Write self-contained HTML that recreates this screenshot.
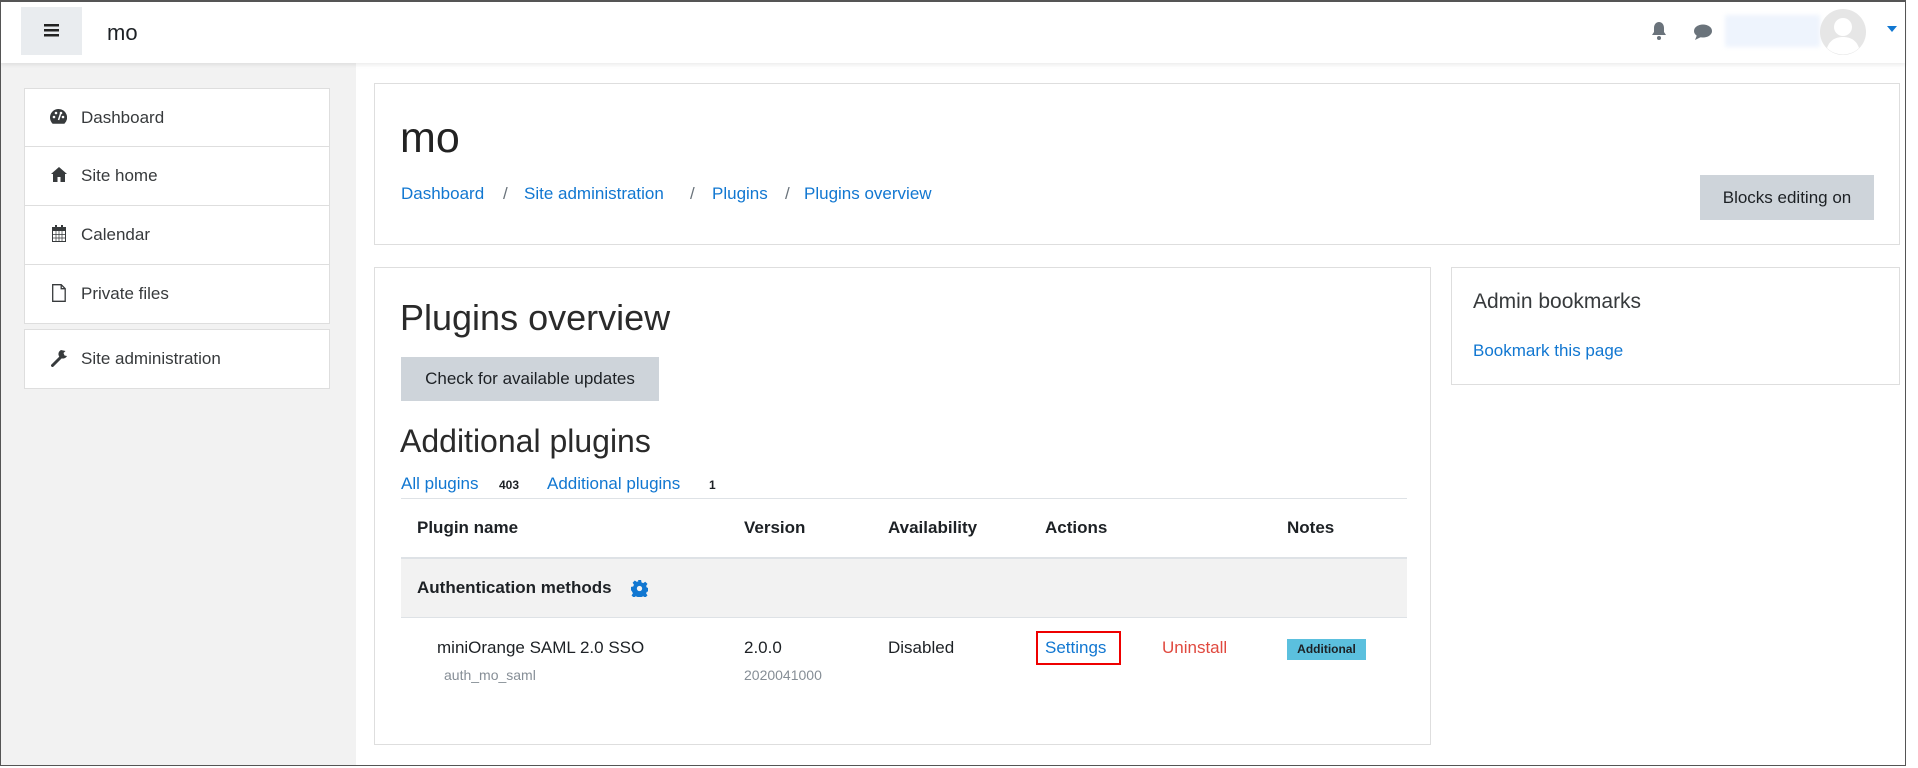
<!DOCTYPE html>
<html><head><meta charset="utf-8"><style>
*{box-sizing:border-box;margin:0;padding:0}
body{width:1918px;height:768px;overflow:hidden;background:#fff;font-family:"Liberation Sans",sans-serif;color:#373a3c;position:relative}
.a{position:absolute;white-space:nowrap}
.frame{position:absolute;left:0;top:0;width:1906px;height:766px;border:1px solid #555;border-top:2px solid #555}
.hdr{position:absolute;left:1px;top:2px;width:1904px;height:61px;background:#fff;box-shadow:0 2px 4px rgba(0,0,0,.08)}
.side{position:absolute;left:1px;top:63px;width:355px;height:702px;background:#f2f2f2}
.box{position:absolute;background:#fff;border:1px solid #dedede}
.link{color:#1177d1}
.nav{font-size:17px;color:#373a3c}
.btn{position:absolute;background:#ced4da;font-size:17px;color:#1d2125;display:flex;align-items:center;justify-content:center}
.th{font-weight:bold;font-size:17px;color:#1d2125}
.sep{color:#6a737b;font-size:17px}
</style></head><body>
<div class="side"></div>
<div class="hdr"></div>
<div class="a" style="left:21px;top:7px;width:61px;height:48px;background:#e9ecef"></div>
<svg class="a" style="left:44px;top:24px" width="15" height="13"><rect y="0" width="15" height="2.5" fill="#222"/><rect y="5" width="15" height="2.5" fill="#222"/><rect y="10" width="15" height="2.5" fill="#222"/></svg>
<div class="a" style="left:107px;top:20px;font-size:22px;color:#1d2125">mo</div>
<svg class="a" style="left:1651px;top:21px" width="16" height="20" viewBox="0 0 16 20"><path d="M8 1c-3 0-5 2.5-5 6v4l-2 3h14l-2-3V7c0-3.5-2-6-5-6z" fill="#6a737b"/><circle cx="8" cy="17" r="2" fill="#6a737b"/></svg>
<svg class="a" style="left:1693px;top:23px" width="20" height="18" viewBox="0 0 20 18"><ellipse cx="10" cy="8" rx="9" ry="6.5" fill="#6a737b"/><path d="M4 12l-2 5 6-3z" fill="#6a737b"/></svg>
<div class="a" style="left:1725px;top:15px;width:95px;height:32px;background:#eef4fd;filter:blur(2px)"></div>
<svg class="a" style="left:1820px;top:9px" width="46" height="46" viewBox="0 0 46 46"><circle cx="23" cy="23" r="23" fill="#e6e6e6"/><circle cx="23" cy="18" r="9" fill="#fff"/><path d="M7 39c3-9 10-11 16-11s13 2 16 11a23 23 0 0 1-32 0z" fill="#fff"/></svg>
<svg class="a" style="left:1887px;top:26px" width="10" height="6"><path d="M0 0h10L5 6z" fill="#1177d1"/></svg>

<div class="box" style="left:24px;top:88px;width:306px;height:236px"></div>
<div class="a" style="left:25px;top:146px;width:304px;height:1px;background:#dedede"></div>
<div class="a" style="left:25px;top:205px;width:304px;height:1px;background:#dedede"></div>
<div class="a" style="left:25px;top:264px;width:304px;height:1px;background:#dedede"></div>
<div class="box" style="left:24px;top:329px;width:306px;height:60px"></div>
<svg class="a" style="left:50px;top:109px" width="17" height="15" viewBox="0 0 17 15"><path d="M8.5 0A8.5 8.5 0 0 0 0 8.5c0 2.5 1 4.6 2.6 6.2h11.8A8.5 8.5 0 0 0 8.5 0z" fill="#373a3c"/><circle cx="4" cy="8" r="1.3" fill="#fff"/><circle cx="6" cy="4" r="1.3" fill="#fff"/><circle cx="11" cy="4" r="1.3" fill="#fff"/><circle cx="13" cy="8" r="1.3" fill="#fff"/><path d="M8.5 11l2-6" stroke="#fff" stroke-width="1.5"/></svg>
<div class="a nav" style="left:81px;top:108px">Dashboard</div>
<svg class="a" style="left:51px;top:167px" width="16" height="15" viewBox="0 0 16 15"><path d="M8 0L0 7h2v8h4.5v-5h3v5H14V7h2z" fill="#373a3c"/></svg>
<div class="a nav" style="left:81px;top:166px">Site home</div>
<svg class="a" style="left:52px;top:225px" width="14" height="17" viewBox="0 0 14 17"><rect x="0.5" y="2.5" width="13" height="14" fill="none" stroke="#373a3c"/><rect x="0.5" y="2.5" width="13" height="3.5" fill="#373a3c"/><rect x="3" y="0" width="2" height="4" fill="#373a3c"/><rect x="9" y="0" width="2" height="4" fill="#373a3c"/><path d="M0 9.5h14M0 13h14M4 6v11M7 6v11M10 6v11" stroke="#373a3c" stroke-width=".7"/></svg>
<div class="a nav" style="left:81px;top:225px">Calendar</div>
<svg class="a" style="left:52px;top:284px" width="14" height="18" viewBox="0 0 14 18"><path d="M.7.7h8.5l4 4v12.6H.7z M9.2.7v4h4" fill="none" stroke="#373a3c" stroke-width="1.3"/></svg>
<div class="a nav" style="left:81px;top:284px">Private files</div>
<svg class="a" style="left:51px;top:349px" width="17" height="18" viewBox="0 0 17 18"><path d="M1.5 16.5l8-8" stroke="#373a3c" stroke-width="3" stroke-linecap="round"/><path d="M10 1a4.5 4.5 0 1 0 6 6l-2.5-.5-1-2.5 2-2z" fill="#373a3c"/></svg>
<div class="a nav" style="left:81px;top:349px">Site administration</div>

<div class="box" style="left:374px;top:83px;width:1526px;height:162px"></div>
<div class="a" style="left:400px;top:114px;font-size:43px;color:#222">mo</div>
<div class="a link" style="left:401px;top:184px;font-size:17px">Dashboard</div>
<div class="a sep" style="left:503px;top:184px">/</div>
<div class="a link" style="left:524px;top:184px;font-size:17px">Site administration</div>
<div class="a sep" style="left:690px;top:184px">/</div>
<div class="a link" style="left:712px;top:184px;font-size:17px">Plugins</div>
<div class="a sep" style="left:785px;top:184px">/</div>
<div class="a link" style="left:804px;top:184px;font-size:17px">Plugins overview</div>
<div class="btn" style="left:1700px;top:175px;width:174px;height:45px">Blocks editing on</div>

<div class="box" style="left:374px;top:267px;width:1057px;height:478px"></div>
<div class="a" style="left:400px;top:297px;font-size:36px;color:#2a2a2a">Plugins overview</div>
<div class="btn" style="left:401px;top:357px;width:258px;height:44px">Check for available updates</div>
<div class="a" style="left:400px;top:423px;font-size:32px;color:#2a2a2a">Additional plugins</div>
<div class="a link" style="left:401px;top:474px;font-size:17px">All plugins</div>
<div class="a" style="left:499px;top:478px;font-size:12px;font-weight:bold;color:#1d2125">403</div>
<div class="a link" style="left:547px;top:474px;font-size:17px">Additional plugins</div>
<div class="a" style="left:709px;top:478px;font-size:12px;font-weight:bold;color:#1d2125">1</div>
<div class="a" style="left:401px;top:498px;width:1006px;height:1px;background:#dee2e6"></div>
<div class="a th" style="left:417px;top:518px">Plugin name</div>
<div class="a th" style="left:744px;top:518px">Version</div>
<div class="a th" style="left:888px;top:518px">Availability</div>
<div class="a th" style="left:1045px;top:518px">Actions</div>
<div class="a th" style="left:1287px;top:518px">Notes</div>
<div class="a" style="left:401px;top:557px;width:1006px;height:61px;background:#f2f2f2;border-top:2px solid #dee2e6;border-bottom:1px solid #dee2e6"></div>
<div class="a th" style="left:417px;top:578px">Authentication methods</div>
<svg class="a" style="left:631px;top:580px" width="17" height="17" viewBox="0 0 16 16"><path d="M6.5 0h3l.4 2.2 1.6.7 1.9-1.3 2.1 2.1-1.3 1.9.7 1.6 2.1.4v3l-2.1.4-.7 1.6 1.3 1.9-2.1 2.1-1.9-1.3-1.6.7-.4 2.1h-3l-.4-2.1-1.6-.7-1.9 1.3-2.1-2.1 1.3-1.9-.7-1.6L0 9.5v-3l2.1-.4.7-1.6-1.3-1.9 2.1-2.1 1.9 1.3 1.6-.7z" fill="#1177d1"/><circle cx="8" cy="8" r="2.5" fill="#f2f2f2"/></svg>
<div class="a" style="left:437px;top:638px;font-size:17px;color:#1d2125">miniOrange SAML 2.0 SSO</div>
<div class="a" style="left:444px;top:667px;font-size:14px;color:#868e96">auth_mo_saml</div>
<div class="a" style="left:744px;top:638px;font-size:17px;color:#1d2125">2.0.0</div>
<div class="a" style="left:744px;top:667px;font-size:14px;color:#868e96">2020041000</div>
<div class="a" style="left:888px;top:638px;font-size:17px;color:#1d2125">Disabled</div>
<div class="a" style="left:1036px;top:631px;width:85px;height:34px;border:2px solid #e00"></div>
<div class="a link" style="left:1045px;top:638px;font-size:17px">Settings</div>
<div class="a" style="left:1162px;top:638px;font-size:17px;color:#e0493f">Uninstall</div>
<div class="a" style="left:1287px;top:639px;width:79px;height:21px;background:#5bc0de;font-size:12px;font-weight:bold;color:#1d2125;text-align:center;line-height:21px">Additional</div>

<div class="box" style="left:1451px;top:267px;width:449px;height:118px"></div>
<div class="a" style="left:1473px;top:290px;font-size:21px;color:#373a3c">Admin bookmarks</div>
<div class="a link" style="left:1473px;top:341px;font-size:17px">Bookmark this page</div>
<div class="frame"></div>
</body></html>
